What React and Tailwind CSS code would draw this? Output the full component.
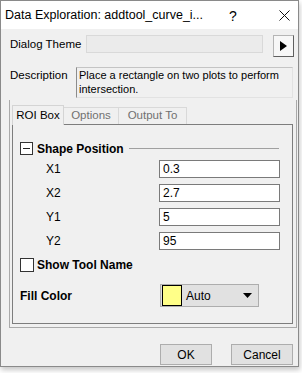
import React from "react";

const rows = [
  { label: "X1", value: "0.3" },
  { label: "X2", value: "2.7" },
  { label: "Y1", value: "5" },
  { label: "Y2", value: "95" },
];

const tabs = [
  { name: "ROI Box", w: "w-[52px]", active: true },
  { name: "Options", w: "w-[55px]" },
  { name: "Output To", w: "w-[68px]" },
];

export default function App() {
  return (
    <div className="w-[302px] h-[373px] bg-white font-['Liberation_Sans',Arial,sans-serif] text-[11px] text-black">
      <div className="w-[299px] h-[367px] border border-[#8a8a8a] bg-[#f0f0f0] flex flex-col shadow-[1px_3px_5px_rgba(0,0,0,0.22)]">
        {/* title bar */}
        <div className="h-[28px] bg-white flex items-center pl-[4px] shrink-0">
          <span className="text-[12.5px] leading-none mt-[1px]">Data Exploration: addtool_curve_i...</span>
          <span className="ml-[26px] text-[14px] leading-none mt-[1px]">?</span>
          <svg className="ml-[42px] mt-[1px]" width="11" height="11" viewBox="0 0 11 11">
            <path d="M0.5 0.5 L10.5 10.5 M10.5 0.5 L0.5 10.5" stroke="#111" strokeWidth="1" />
          </svg>
        </div>

        {/* dialog theme */}
        <div className="flex items-start mt-[6px] pl-[9px]">
          <div className="w-[76px] leading-[18px] text-[11.5px]">Dialog Theme</div>
          <div className="w-[177px] h-[18px] bg-[#ebebeb] border border-[#d9d9d9]" />
          <div className="ml-[10px] w-[21px] h-[22px] bg-[#f7f7f7] border border-[#b5b5b5] border-r-[#5f5f5f] border-b-[#5f5f5f] flex items-center justify-center">
            <svg width="7" height="10" viewBox="0 0 7 10">
              <path d="M0 0 L7 5 L0 10 Z" fill="#000" />
            </svg>
          </div>
        </div>

        {/* description */}
        <div className="flex items-start mt-[10px] pl-[9px]">
          <div className="w-[66px] pt-[1px] leading-[14px] text-[11.5px]">Description</div>
          <div className="w-[217px] h-[31px] border border-[#c4c4c4] border-l-[#8c8c8c] border-r-[#e2e2e2] border-b-[#e2e2e2] pl-[2px] pt-[0px] leading-[14px]">
            Place a rectangle on two plots to perform intersection.
          </div>
        </div>

        {/* tab frame */}
        <div className="mt-[2px] ml-[8px] w-[288px] border-l border-r border-b border-[#a9a9a9] pt-[5px] pl-[2px] pb-[3px]">
          <div className="flex items-end h-[19px] text-[11.5px]">
            {tabs.map((t) =>
              t.active ? (
                <div
                  key={t.name}
                  className={`${t.w} h-[20px] -mb-[1px] relative z-10 bg-[#f0f0f0] border border-b-0 border-[#d4d4d4] flex items-center justify-center`}
                >
                  {t.name}
                </div>
              ) : (
                <div
                  key={t.name}
                  className={`${t.w} h-[17px] bg-[#f0f0f0] border border-l-0 border-b-0 border-[#d9d9d9] text-[#707070] flex items-center justify-center`}
                >
                  {t.name}
                </div>
              )
            )}
          </div>
          <div className="w-[281px] h-[200px] border border-[#7d7d7d] flex flex-col">
            {/* shape position */}
            <div className="flex items-center mt-[17px] pl-[7px] h-[13px]">
              <div className="w-[13px] h-[13px] border border-[#333] bg-white flex items-center justify-center">
                <div className="w-[7px] h-[1px] bg-[#222]" />
              </div>
              <span className="ml-[4px] font-bold text-[12px]">Shape Position</span>
              <div className="ml-[5px] w-[150px] h-[1px] bg-[#a0a0a0]" />
            </div>

            <div className="flex flex-col gap-[6px] mt-[5px]">
              {rows.map((r) => (
                <div key={r.label} className="flex items-center h-[18px]">
                  <div className="w-[146px] pl-[33px] text-[12px]">{r.label}</div>
                  <div className="w-[121px] h-[18px] bg-white border border-[#7a7a7a] pl-[3px] leading-[16px] text-[12px]">
                    {r.value}
                  </div>
                </div>
              ))}
            </div>

            {/* show tool name */}
            <div className="flex items-center mt-[8px] pl-[7px] h-[14px]">
              <div className="w-[14px] h-[14px] border border-[#333] bg-white" />
              <span className="ml-[3px] font-bold text-[12px]">Show Tool Name</span>
            </div>

            {/* fill color */}
            <div className="flex items-center mt-[12px] pl-[7px] h-[23px]">
              <span className="w-[140px] font-bold text-[12px]">Fill Color</span>
              <div className="w-[99px] h-[23px] bg-[#e1e1e1] border border-[#adadad] flex items-center pl-[1px]">
                <div className="w-[20px] h-[21px] bg-[#ffff88] border border-black" />
                <span className="ml-[4px] text-[12px]">Auto</span>
                <svg className="ml-auto mr-[6px]" width="9" height="5" viewBox="0 0 9 5">
                  <path d="M0 0 L9 0 L4.5 5 Z" fill="#000" />
                </svg>
              </div>
            </div>
          </div>
        </div>

        {/* buttons */}
        <div className="flex mt-[16px] pl-[159px] gap-[19px] text-[12px]">
          <div className="w-[52px] h-[21px] bg-[#e1e1e1] border border-[#adadad] flex items-center justify-center">OK</div>
          <div className="w-[62px] h-[21px] bg-[#e1e1e1] border border-[#adadad] flex items-center justify-center">Cancel</div>
        </div>
      </div>
    </div>
  );
}
